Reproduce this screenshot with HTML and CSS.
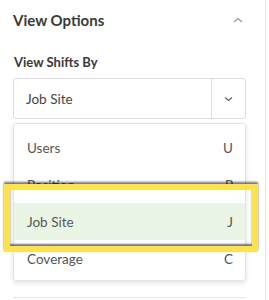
FILE: index.html
```html
<!DOCTYPE html>
<html lang="en">
<head>
    <meta charset="UTF-8">
    <title>View Options</title>
    <link rel="stylesheet" href="styles.css">
</head>
<body>

<div class="panel">
    <div class="panel-head">
        <h2>View Options</h2>
        <svg class="collapse" width="10" height="6" viewBox="0 0 10 6"><path d="M1 5 L5 1.5 L9 5" fill="none" stroke="#999" stroke-width="1.3"/></svg>
    </div>

    <label class="field-label">View Shifts By</label>
    <div class="select">
        <span class="select-value">Job Site</span>
        <span class="select-arrow">
            <svg width="9" height="6" viewBox="0 0 9 6"><path d="M1 1.5 L4.5 4.5 L8 1.5" fill="none" stroke="#666" stroke-width="1.3"/></svg>
        </span>
    </div>

    <ul class="menu">
        <li><span>Users</span><span>U</span></li>
        <li><span>Position</span><span>P</span></li>
        <li class="active"><span>Job Site</span><span>J</span></li>
        <li><span>Coverage</span><span>C</span></li>
    </ul>

    <div class="rule"></div>
</div>

<div class="callout"></div>

</body>
</html>
```

FILE: styles.css
```css
body {
    margin: 0;
    background: #fff;
    font-family: 'Lato', 'Open Sans', sans-serif;
    color: #333;
}
.panel {
    width: 266px;
    height: 300px;
    box-sizing: border-box;
    border-right: 1px solid #e6e6e6;
    padding: 10px 19px 0 13px;
}
.panel-head {
    display: flex;
    justify-content: space-between;
    align-items: center;
    height: 20px;
    padding-right: 3px;
}
.panel-head h2 {
    margin: 0;
    font-size: 15px;
    font-weight: 700;
    color: #3a3a3a;
}
.field-label {
    display: block;
    margin-top: 23px;
    font-size: 13px;
    font-weight: 700;
    color: #3a3a3a;
    line-height: 18px;
    padding-left: 1px;
}
.select {
    display: flex;
    margin-top: 7px;
    height: 41px;
    box-sizing: border-box;
    border: 1px solid #ddd;
    border-radius: 3px;
}
.select-value {
    flex: 1;
    display: flex;
    align-items: center;
    padding-left: 12px;
    font-size: 13.5px;
    color: #444;
}
.select-arrow {
    width: 33px;
    display: flex;
    align-items: center;
    justify-content: center;
    border-left: 1px solid #ddd;
}
.menu {
    list-style: none;
    margin: 4px 0 0;
    padding: 5px 0 3px;
    border: 1px solid #e3e3e3;
    border-radius: 3px;
    box-shadow: 0 2px 5px rgba(0, 0, 0, 0.12);
}
.menu li {
    display: flex;
    justify-content: space-between;
    align-items: center;
    height: 37px;
    padding: 0 12px 0 13px;
    font-size: 13.5px;
    color: #555;
}
.menu li.active {
    background: #eaf5e6;
}
.rule {
    margin-top: 16px;
    border-top: 1px solid #e6e6e6;
}
.callout {
    position: absolute;
    left: 4px;
    top: 184px;
    width: 254px;
    height: 68px;
    box-sizing: border-box;
    border: 6px solid #fde24f;
    box-shadow: 0 -2px 2px rgba(0, 0, 0, 0.55), inset 0 -2px 2px rgba(0, 0, 0, 0.55);
}
```
